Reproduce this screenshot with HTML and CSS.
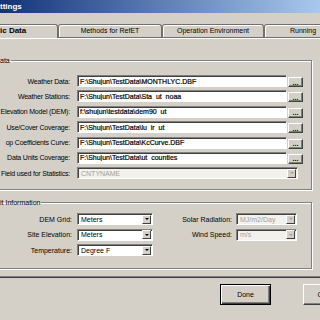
FILE: index.html
```html
<!DOCTYPE html>
<html lang="en">
<head>
    <meta charset="UTF-8">
    <meta name="viewport" content="width=device-width, initial-scale=1.0">
    <title>Settings</title>
    <link rel="stylesheet" href="styles.css">
</head>
<body>
    <div class="titlebar">ttings</div>
    <div class="dialog">
        <div class="tabs">
            <div class="tab active">ic Data</div>
            <div class="tab tab-methods">Methods for RefET</div>
            <div class="tab tab-operation">Operation Environment</div>
            <div class="tab tab-running">Running</div>
        </div>
        <div class="panel">
            <fieldset class="group input-group">
                <legend>ata</legend>
                <div class="file-grid">
                    <label>Weather Data:</label>
                    <input type="text" class="field" value="F:\Shujun\TestData\MONTHLYC.DBF">
                    <button class="browse">...</button>

                    <label>Weather Stations:</label>
                    <input type="text" class="field" value="F:\Shujun\TestData\Sta_ut_noaa">
                    <button class="browse">...</button>

                    <label>Elevation Model (DEM):</label>
                    <input type="text" class="field" value="f:\shujun\testdata\dem90_ut">
                    <button class="browse">...</button>

                    <label>Use/Cover Coverage:</label>
                    <input type="text" class="field" value="F:\Shujun\TestData\lu_ir_ut">
                    <button class="browse">...</button>

                    <label>op Coefficients Curve:</label>
                    <input type="text" class="field" value="F:\Shujun\TestData\KcCurve.DBF">
                    <button class="browse">...</button>

                    <label>Data Units Coverage:</label>
                    <input type="text" class="field" value="F:\Shujun\TestData\ut_counties">
                    <button class="browse">...</button>

                    <label>Field used for Statistics:</label>
                    <div class="combo combo-wide disabled"><span class="value">CNTYNAME</span><span class="arrow"></span></div>
                </div>
            </fieldset>

            <fieldset class="group unit-group">
                <legend>it Information</legend>
                <div class="unit-grid">
                    <label>DEM Grid:</label>
                    <div class="combo"><span class="value">Meters</span><span class="arrow"></span></div>
                    <label class="right-label">Solar Radiation:</label>
                    <div class="combo disabled"><span class="value">MJ/m2/Day</span><span class="arrow"></span></div>

                    <label>Site Elevation:</label>
                    <div class="combo"><span class="value">Meters</span><span class="arrow"></span></div>
                    <label class="right-label">Wind Speed:</label>
                    <div class="combo disabled"><span class="value">m/s</span><span class="arrow"></span></div>

                    <label>Temperature:</label>
                    <div class="combo"><span class="value">Degree F</span><span class="arrow"></span></div>
                </div>
            </fieldset>
        </div>
        <div class="buttons">
            <button class="btn default">Done</button>
            <button class="btn cancel">Cancel</button>
        </div>
    </div>
</body>
</html>
```

FILE: styles.css
```css
body {
    margin: 0;
    width: 320px;
    height: 320px;
    overflow: hidden;
    background-color: #D4D0C8;
    font-family: "Liberation Sans", Arial, sans-serif;
    font-size: 7px;
    color: #000;
}
.titlebar {
    height: 13px;
    line-height: 13px;
    background: linear-gradient(90deg, #13337a, #a8c8ee);
    color: white;
    font-weight: bold;
    font-size: 8px;
    white-space: nowrap;
}
.dialog {
    margin-left: -20px;
    width: 360px;
}

/* tab strip */
.tabs {
    display: flex;
    align-items: flex-end;
    margin-top: 11px;
    height: 13px;
}
.tab {
    flex-shrink: 0;
    height: 13px;
    box-sizing: border-box;
    border: 1px solid #6f6f6f;
    border-bottom: none;
    border-radius: 3px 3px 0 0;
    box-shadow: inset 1px 1px #fff;
    text-align: center;
    line-height: 12px;
    white-space: nowrap;
}
.tab.active {
    width: 78px;
    height: 14px;
    padding-left: 19px;
    text-align: left;
    font-weight: bold;
    font-size: 8px;
    margin-bottom: -1px;
    background-color: #D4D0C8;
    position: relative;
    z-index: 1;
}
.tab-methods {
    width: 104px;
}
.tab-operation {
    width: 102px;
}
.tab-running {
    width: 110px;
    padding-left: 25px;
    text-align: left;
}

.panel {
    border-top: 1px solid #6f6f6f;
    border-bottom: 1px solid #404040;
    box-shadow: inset 0 1px #fff, inset 0 -1px #808080;
    padding: 18px 0 8px 10px;
}

/* group boxes */
.group {
    margin: 0;
    width: 322px;
    box-sizing: border-box;
    min-width: 0;
    border: 1px solid #808080;
    box-shadow: 1px 1px 0 #fff, inset 1px 1px 0 #fff;
}
.group legend {
    padding: 0 1px;
    line-height: 9px;
    white-space: nowrap;
}
.input-group {
    padding: 10px 8px 10px 8px;
}
.unit-group {
    margin-top: 8px;
    padding: 6px 8px 12px 8px;
}
.file-grid {
    display: grid;
    grid-template-columns: 78px 210px 16px;
    grid-auto-rows: 12px;
    row-gap: 3.4px;
}
.unit-grid {
    display: grid;
    grid-template-columns: 78px 76px 83px 61px;
    grid-auto-rows: 12px;
    row-gap: 3.5px;
}
.file-grid label, .unit-grid label {
    display: flex;
    justify-content: flex-end;
    align-items: center;
    white-space: nowrap;
    letter-spacing: -0.2px;
    padding-right: 7px;
}
.unit-grid label {
    letter-spacing: 0;
    padding-right: 5px;
}
.unit-grid .right-label {
    padding-right: 4px;
}

/* sunken edit fields */
.field, .combo {
    height: 12px;
    box-sizing: border-box;
    margin: 0;
    border: 1px solid;
    border-color: #808080 #fff #fff #808080;
    box-shadow: inset 1px 1px #404040;
    background-color: #fff;
    font-family: inherit;
    font-size: 7px;
    color: #000;
}
.field {
    width: 210px;
    padding: 0 2px;
    line-height: 10px;
    outline: none;
    -webkit-text-stroke: 0.2px #000;
}
.browse {
    margin: 2px 0 0 1px;
    width: 15px;
    height: 10px;
    padding: 0;
    box-sizing: border-box;
    border: 1px solid;
    border-color: #fff #404040 #404040 #fff;
    box-shadow: inset -1px -1px #808080;
    background-color: #D4D0C8;
    font-family: inherit;
    font-size: 7px;
    line-height: 7px;
    font-weight: bold;
}
.combo {
    display: flex;
    align-items: center;
    padding: 1px;
}
.combo .value {
    padding-left: 2px;
    white-space: nowrap;
}
.combo .arrow {
    margin-left: auto;
    width: 9px;
    height: 9px;
    box-sizing: border-box;
    border: 1px solid;
    border-color: #fff #404040 #404040 #fff;
    background-color: #D4D0C8;
    display: flex;
    align-items: center;
    justify-content: center;
}
.combo .arrow::after {
    content: "";
    border-left: 2px solid transparent;
    border-right: 2px solid transparent;
    border-top: 2px solid #000;
}
.combo-wide {
    grid-column: 2 / 4;
    width: 221px;
}
.combo.disabled {
    background-color: #F2F1EC;
}
.combo.disabled .value {
    color: #A0A0A0;
}
.combo.disabled .arrow::after {
    border-top-color: #A0A0A0;
}

/* bottom buttons */
.buttons {
    display: flex;
    margin-top: 6px;
    padding-left: 240px;
}
.btn {
    flex-shrink: 0;
    width: 51px;
    height: 21px;
    padding: 0;
    background-color: #D4D0C8;
    font-family: inherit;
    font-size: 7px;
    color: #000;
}
.btn.default {
    border: 1px solid #000;
    box-shadow: inset 1px 1px #fff, inset -1px -1px #404040, inset -2px -2px #808080;
}
.btn.cancel {
    margin-left: 32px;
    border: 1px solid;
    border-color: #fff #404040 #404040 #fff;
    box-shadow: inset -1px -1px #808080;
}
```
